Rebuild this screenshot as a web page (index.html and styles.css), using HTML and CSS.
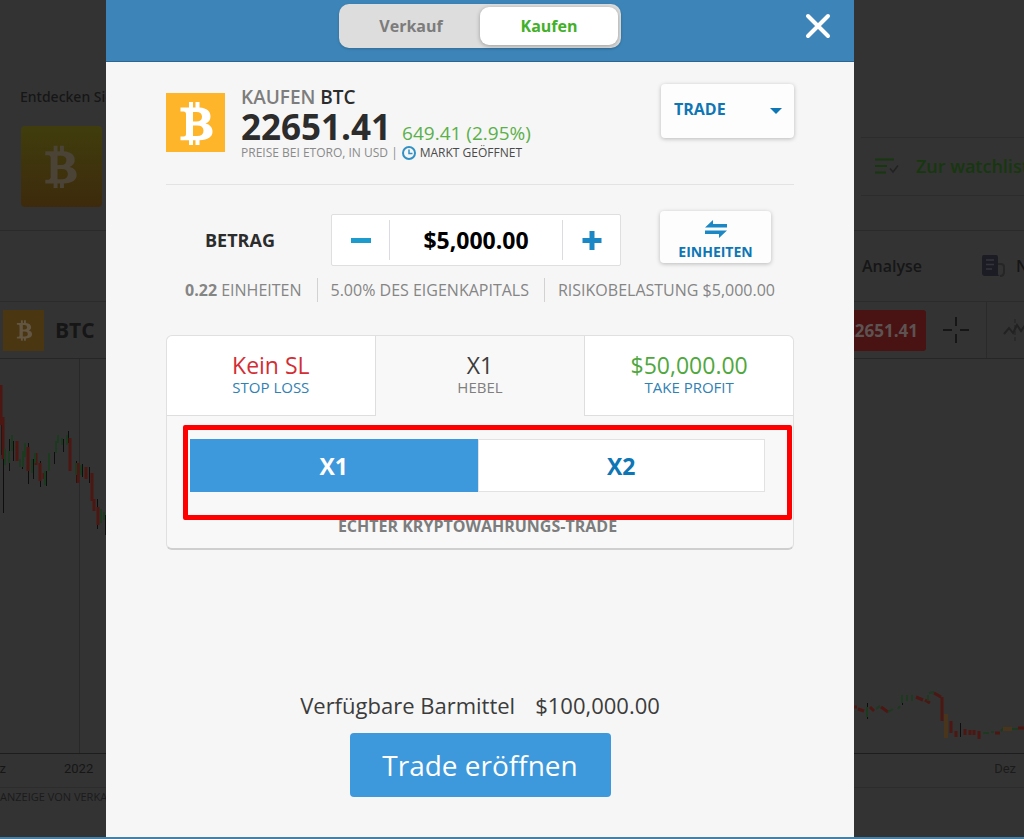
FILE: index.html
```html
<!DOCTYPE html>
<html lang="de">
<head>
    <meta charset="utf-8">
    <meta name="viewport" content="width=device-width, initial-scale=1">
    <title>BTC Kaufen</title>
    <link rel="stylesheet" href="styles.css">
</head>
<body>
    <svg class="sprite" aria-hidden="true">
        <symbol id="btc" viewBox="0 0 59 59">
            <path fill="currentColor" fill-rule="evenodd" d="M14.500 14.500H23V9H27V14.500H29.500V9H33.500V14.500C41 15 44.500 18.500 44.500 23.500C44.500 27 42.500 29.500 39.500 30.500C44 31.500 46.500 34.500 46.500 38.500C46.500 44 42 47 33.500 47.300V52H29.500V47.300H27V52H23V47.300H14.500V43.500H17.500Q20 43.500 20 41V21Q20 18.500 17.500 18.500H14.500ZM27 19V28.500H30.500Q36 28.500 36 23.700Q36 19 30.500 19ZM27 32.500V43H31Q37.500 43 37.500 37.700Q37.500 32.500 31 32.500Z"/>
        </symbol>
    </svg>

    <div class="shell">
        <!-- Market page behind the dialog -->
        <main class="page">
            <p class="discover">Entdecken Sie</p>
            <div class="asset-row">
                <div class="asset-logo"><svg><use href="#btc"/></svg></div>
                <a class="watchlist" href="#">
                    <svg width="24" height="16" viewBox="0 0 24 16" fill="none" stroke="currentColor" stroke-width="2">
                        <path d="M0 1.500H19M0 8H12M0 14.500H11"/>
                        <path d="M15 10.500L18 14L23 7.500" stroke="#222" stroke-width="1.500"/>
                    </svg>
                    Zur watchlist
                </a>
            </div>
            <nav class="page-tabs">
                <a href="#">Analyse</a>
                <a href="#" class="news-tab">
                    <svg width="24" height="24" viewBox="0 0 24 24">
                        <path d="M3 1H15Q17 1 17 3V20Q17 22 19 22H4Q1 22 1 19V3Q1 1 3 1Z" fill="#1c1d24"/>
                        <path d="M17 10H20Q23 10 23 13V18Q23 22 19 22" fill="none" stroke="#262626" stroke-width="2"/>
                        <path d="M5 6H13M5 10.500H13M5 15H11" stroke="#33353c" stroke-width="1.500"/>
                    </svg>
                    News
                </a>
            </nav>
            <div class="chart-bar">
                <div class="chart-logo"><svg><use href="#btc"/></svg></div>
                <strong class="chart-name">BTC</strong>
                <span class="price-tag">22651.41</span>
                <div class="tool">
                    <svg width="26" height="26" viewBox="0 0 26 26" stroke="#161616" stroke-width="2">
                        <path d="M13 0V9M13 17V26M0 13H9M17 13H26"/>
                    </svg>
                </div>
                <div class="tool tool-wave">
                    <svg width="36" height="26" viewBox="0 0 36 26" fill="none" stroke="#222" stroke-width="2">
                        <path d="M1 17L6 11L10 16L14 8L18 14L23 7L28 12L35 8"/>
                        <path d="M12 2V24" stroke-width="1" stroke-dasharray="4 2"/>
                    </svg>
                </div>
            </div>
            <svg class="chart" viewBox="0 0 1024 394" preserveAspectRatio="none" fill="none">
                <path stroke="#282828" d="M79.500 0V394"/>
                <path stroke="#0e0e0e" d="M1.500 60V96M3.500 90V154M9.500 80V112M13.500 82V102M22.500 96V110M28.500 84V125M33.500 100V120M40.500 102V128M46.500 112V127M54.500 93V105M63.500 80V93M68.500 72V84M76.500 102V124M82.500 105V118M89.500 108V124M97.500 140V170M105.500 156V176M867.500 344V360M960.500 364V378M902.500 336V346"/>
                <path stroke="#4c1712" stroke-width="3" d="M1 26V66M3 58V100M17 82V102M28 88V112M36 94V106M40 104V122M44 114V120M70 79V112M78 104V124M86 108V120M92 114V142M94 140V152M98 148V166M854 348H857M858 350L864 352M870 348L874 352M881 348L888 353M916 338L923 341M925 341L930 344M934 334L941 338M942 338V362M951 362V374M956 372V378M965 370V376M970 371V376M974 371V376M979 372V380M995 374H1000M1018 369H1024"/>
                <path stroke="#1b3a20" stroke-width="2" d="M5 90V106M9 92V104M12 76V92M20 100V108M23 92V108M25 84V98M32 100V114M35 94V104M45 112V126M49 94V112M56 82V94M58 76V84M62 79V86M67 76V86M76 104V116M81 106V116M101 150V164M104 153V161M867 348V358M876 350L880 347M888 353L893 350M898 350L900 347M902 336V344M907 336V342M912 336V342M928 336V342M929 334L934 333M983 374H989M991 373H994M1001 372L1004 369M1010 370H1018"/>
                <path stroke="#49341c" stroke-width="4" d="M946 355V379M1003 370H1012"/>
            </svg>
            <div class="axis">
                <span>rz</span>
                <span>2022</span>
                <span class="axis-end">Dez</span>
            </div>
            <p class="notice">ANZEIGE VON VERKAUF</p>
        </main>
        <div class="bottom-strip"></div>

        <!-- Trade dialog -->
        <div class="overlay">
            <section class="dialog" role="dialog" aria-label="Trade">
                <header class="dialog-header">
                    <div class="side-toggle">
                        <button type="button">Verkauf</button>
                        <button type="button" class="active">Kaufen</button>
                    </div>
                    <button type="button" class="close" aria-label="Schließen">
                        <svg width="26" height="26" viewBox="0 0 26 26" stroke="#fff" stroke-width="4" stroke-linecap="round">
                            <path d="M3 3L23 23M23 3L3 23"/>
                        </svg>
                    </button>
                </header>

                <div class="dialog-body">
                    <div class="quote">
                        <div class="quote-logo"><svg><use href="#btc"/></svg></div>
                        <div class="quote-info">
                            <h1>KAUFEN <span>BTC</span></h1>
                            <p class="quote-price"><strong>22651.41</strong> <span>649.41 (2.95%)</span></p>
                            <p class="quote-note">
                                PREISE BEI ETORO, IN USD |
                                <svg width="14" height="14" viewBox="0 0 14 14" fill="none" stroke="#3191c5" stroke-width="2">
                                    <circle cx="7" cy="7" r="6"/>
                                    <path d="M7 3.500V7.500H10.500" stroke-width="1.500"/>
                                </svg>
                                <span>MARKT GEÖFFNET</span>
                            </p>
                        </div>
                        <div class="order-type">
                            <select aria-label="Orderart">
                                <option>TRADE</option>
                            </select>
                            <svg width="12" height="6" viewBox="0 0 12 6"><path d="M0 0H12L6 6Z" fill="#0e76b5"/></svg>
                        </div>
                    </div>

                    <div class="amount">
                        <label for="amount">BETRAG</label>
                        <div class="stepper">
                            <button type="button" aria-label="Weniger">
                                <svg width="20" height="20" viewBox="0 0 20 20"><path d="M0 8H20V13H0Z" fill="#1e9bcd"/></svg>
                            </button>
                            <input type="text" id="amount" value="$5,000.00">
                            <button type="button" aria-label="Mehr">
                                <svg width="20" height="20" viewBox="0 0 20 20"><path d="M7.500 1H12.500V8H19.500V13H12.500V20H7.500V13H0.500V8H7.500Z" fill="#1b87c5"/></svg>
                            </button>
                        </div>
                        <button type="button" class="units">
                            <svg width="22" height="18" viewBox="0 0 22 18" fill="#1b87c5">
                                <path d="M0 7.500L8 0V4H22V7.500Z"/>
                                <path d="M22 10.500L14 18V14H0V10.500Z"/>
                            </svg>
                            EINHEITEN
                        </button>
                    </div>

                    <ul class="facts">
                        <li><strong>0.22</strong> EINHEITEN</li>
                        <li>5.00% DES EIGENKAPITALS</li>
                        <li>RISIKOBELASTUNG $5,000.00</li>
                    </ul>

                    <div class="settings">
                        <div class="settings-tabs">
                            <button type="button" class="stop-loss"><span>Kein SL</span>STOP LOSS</button>
                            <button type="button" class="leverage"><span>X1</span>HEBEL</button>
                            <button type="button" class="take-profit"><span>$50,000.00</span>TAKE PROFIT</button>
                        </div>
                        <div class="leverage-panel">
                            <div class="leverage-options">
                                <button type="button" class="active">X1</button>
                                <button type="button">X2</button>
                            </div>
                            <p>ECHTER KRYPTOWÄHRUNGS-TRADE</p>
                            <div class="highlight"></div>
                        </div>
                    </div>

                    <p class="cash"><span>Verfügbare Barmittel</span><span>$100,000.00</span></p>
                    <button type="button" class="open-trade">Trade eröffnen</button>
                </div>
            </section>
        </div>
    </div>
</body>
</html>
```

FILE: styles.css
```css
* {
    box-sizing: border-box;
}

body, h1, p, ul {
    margin: 0;
    padding: 0;
}

body {
    font-family: "Open Sans", "Noto Sans", sans-serif;
    background-color: #333;
}

button, input, select {
    font-family: inherit;
    margin: 0;
    padding: 0;
    border: 0;
    background: none;
}

a {
    color: inherit;
    text-decoration: none;
}

svg {
    flex-shrink: 0;
}

.sprite {
    display: none;
}

.shell {
    position: relative;
    display: flex;
    flex-direction: column;
    min-height: 100vh;
    overflow: hidden;
}

/* Page behind the dialog */
.page {
    flex: 1;
    display: flex;
    flex-direction: column;
    padding-top: 87px;
    color: #161616;
    white-space: nowrap;
}

.discover {
    padding-left: 20px;
    font-family: "Noto Sans", sans-serif;
    font-size: 14px;
    font-weight: 500;
    line-height: 20px;
}

.asset-row {
    display: flex;
    justify-content: space-between;
    align-items: center;
    height: 124px;
    padding-left: 21px;
    border-bottom: 1px solid #2a2a2a;
}

.asset-logo {
    display: flex;
    width: 81px;
    height: 81px;
    margin-top: -5px;
    border-radius: 4px;
    background: linear-gradient(#403d0d, #3d2a0c);
    color: #4a4336;
}

.asset-logo svg {
    width: 58px;
    height: 58px;
    margin: auto auto auto 10px;
}

.watchlist {
    display: flex;
    align-items: center;
    gap: 17px;
    width: 163px;
    height: 59px;
    margin-top: -5px;
    padding-left: 14px;
    border-top: 1px solid #2c2c2c;
    border-bottom: 1px solid #2c2c2c;
    color: #17370f;
    font-size: 18px;
    font-weight: 600;
}

.page-tabs {
    display: flex;
    justify-content: flex-end;
    align-items: center;
    height: 71px;
    border-bottom: 1px solid #2b2b2b;
    font-size: 16px;
    font-weight: 600;
}

.page-tabs a {
    width: 119px;
}

.page-tabs .news-tab {
    display: flex;
    align-items: center;
    gap: 11px;
    width: 43px;
}

.chart-bar {
    display: flex;
    align-items: center;
    height: 57px;
    padding-left: 3px;
    border-bottom: 1px solid #262626;
}

.chart-logo {
    display: flex;
    width: 41px;
    height: 41px;
    background-color: #4a3611;
    color: #625642;
}

.chart-logo svg {
    width: 28px;
    height: 28px;
    margin: auto;
}

.chart-name {
    flex: 1;
    padding-left: 11px;
    font-size: 21px;
}

.price-tag {
    padding: 0 8px;
    border-radius: 3px;
    background-color: #481312;
    color: #5d5353;
    font-size: 17px;
    font-weight: 700;
    line-height: 41px;
}

.tool {
    display: flex;
    justify-content: center;
    width: 60px;
}

.tool-wave {
    justify-content: flex-start;
    align-items: center;
    width: 38px;
    height: 56px;
    padding-left: 16px;
    border-left: 1px solid #2a2a2a;
    overflow: hidden;
}

.chart {
    display: block;
    width: 100%;
    height: 394px;
}

.axis {
    display: flex;
    height: 34px;
    padding-right: 8px;
    border-top: 1px solid #1d1d1d;
    font-family: Roboto, sans-serif;
    font-size: 13px;
    line-height: 30px;
}

.axis span:first-child {
    width: 69px;
    margin-left: -5px;
}

.axis-end {
    margin-left: auto;
    color: #1b1b1b;
}

.notice {
    border-top: 1px solid #2c2c2c;
    color: #1b1b1b;
    font-size: 11px;
    line-height: 18px;
}

.bottom-strip {
    height: 2px;
    background-color: #4680a4;
}

/* Dialog */
.overlay {
    position: absolute;
    inset: 0 0 2px;
    display: flex;
    padding: 0 170px 0 106px;
}

.dialog {
    flex: 1;
    background-color: #f6f6f6;
    color: #2c2c2c;
}

.dialog-header {
    display: grid;
    grid-template-columns: 1fr auto 1fr;
    align-items: center;
    height: 62px;
    padding-bottom: 10px;
    border-bottom: 1px solid #2c658e;
    background-color: #3d85b9;
}

.side-toggle {
    grid-column: 2;
    display: flex;
    padding: 3px;
    border-radius: 10px;
    background-color: #ddd;
    box-shadow: 0 1px 3px rgba(0, 0, 0, 0.2);
}

.side-toggle button {
    width: 138px;
    height: 38px;
    border-radius: 9px;
    color: #7c7c7c;
    font-size: 16px;
    font-weight: 700;
}

.side-toggle .active {
    background-color: #fff;
    color: #43b02a;
    box-shadow: 0 1px 4px rgba(0, 0, 0, 0.3);
}

.close {
    justify-self: end;
    display: flex;
    margin-right: 23px;
}

.dialog-body {
    padding: 22px 60px 40px;
}

.quote {
    display: flex;
    align-items: flex-start;
    height: 101px;
    border-bottom: 1px solid #e3e3e3;
}

.quote-logo {
    display: flex;
    width: 59px;
    height: 59px;
    margin-top: 9px;
    background-color: #ffb52a;
    color: #fff;
}

.quote-logo svg {
    width: 59px;
    height: 59px;
}

.quote-info {
    flex: 1;
    padding-left: 16px;
    white-space: nowrap;
}

.quote h1 {
    padding-top: 1px;
    color: #7d7d7d;
    font-size: 19px;
    font-weight: 600;
    line-height: 24px;
}

.quote h1 span {
    color: #2c2c2c;
}

.quote-price {
    display: flex;
    align-items: baseline;
    gap: 11px;
    color: #5bb04a;
    font-size: 19px;
    line-height: 20px;
}

.quote-price strong {
    color: #2c2c2c;
    font-size: 35px;
    line-height: 36px;
}

.quote-note {
    display: flex;
    align-items: center;
    gap: 4px;
    color: #8a8a8a;
    font-size: 12px;
    line-height: 16px;
}

.quote-note span {
    color: #4a4a4a;
}

.order-type {
    position: relative;
    width: 133px;
    border-radius: 4px;
    background-color: #fdfdfd;
    box-shadow: 0 1px 4px rgba(0, 0, 0, 0.25);
}

.order-type select {
    display: block;
    width: 100%;
    height: 54px;
    padding: 0 13px 4px;
    appearance: none;
    color: #0e76b5;
    font-size: 16px;
    font-weight: 700;
}

.order-type svg {
    position: absolute;
    top: 24px;
    right: 12px;
    pointer-events: none;
}

/* Amount */
.amount {
    display: flex;
    align-items: center;
    height: 52px;
    margin-top: 29px;
    padding-right: 23px;
}

.amount label {
    flex: 1;
    padding-left: 39px;
    font-size: 18px;
    font-weight: 700;
}

.stepper {
    display: flex;
    align-items: center;
    width: 290px;
    height: 52px;
    border: 1px solid #dfdfdf;
    border-radius: 2px;
    background-color: #fff;
}

.stepper button {
    display: flex;
    justify-content: center;
    width: 57px;
}

.stepper input {
    flex: 1;
    min-width: 0;
    height: 40px;
    border: solid #dcdce0;
    border-width: 0 1px;
    color: #000;
    font-size: 23px;
    font-weight: 700;
    text-align: center;
}

.units {
    display: flex;
    flex-direction: column;
    align-items: center;
    justify-content: flex-end;
    gap: 4px;
    width: 111px;
    height: 52px;
    margin: 0 0 6px 39px;
    padding-bottom: 2px;
    border-radius: 4px;
    background-color: #fdfdfd;
    box-shadow: 0 1px 4px rgba(0, 0, 0, 0.25);
    color: #0e76b5;
    font-size: 14px;
    font-weight: 700;
}

.facts {
    display: flex;
    justify-content: center;
    margin-top: 12px;
    color: #858585;
    font-size: 16px;
    line-height: 24px;
    list-style: none;
    white-space: nowrap;
}

.facts li + li {
    margin-left: 15px;
    padding-left: 13px;
    border-left: 1px solid #d2d2d2;
}

/* Stop loss, leverage, take profit */
.settings {
    margin-top: 33px;
    border: 1px solid #e0e0e0;
    border-bottom: 2px solid #cfcfcf;
    border-radius: 6px;
    background-color: #f8f8f8;
}

.settings-tabs {
    display: grid;
    grid-template-columns: repeat(3, 1fr);
}

.settings-tabs button {
    height: 80px;
    padding-bottom: 3px;
    border-bottom: 1px solid #dedede;
    background-color: #fff;
    color: #2f81b3;
    font-size: 15px;
    line-height: 18px;
}

.settings-tabs span {
    display: block;
    font-size: 23px;
    line-height: 26px;
}

.settings-tabs .stop-loss {
    border-right: 1px solid #dedede;
    border-top-left-radius: 6px;
}

.settings-tabs .take-profit {
    border-left: 1px solid #dedede;
    border-top-right-radius: 6px;
}

.settings-tabs .leverage {
    border-bottom-color: transparent;
    background: none;
    color: #7f7f7f;
}

.settings-tabs .stop-loss span {
    color: #d22e35;
}

.settings-tabs .leverage span {
    color: #3c3c3c;
}

.settings-tabs .take-profit span {
    color: #4fa83d;
}

.leverage-panel {
    position: relative;
    padding: 23px 28px 11px 23px;
    text-align: center;
}

.leverage-options {
    display: grid;
    grid-template-columns: 1fr 1fr;
}

.leverage-options button {
    height: 53px;
    border: 1px solid #e2e2e2;
    background-color: #fff;
    color: #0e76b5;
    font-size: 23px;
    font-weight: 700;
}

.leverage-options .active {
    border-color: #3d98dc;
    background-color: #3d98dc;
    color: #fff;
}

.leverage-panel p {
    margin-top: 23px;
    color: #7d7d7d;
    font-size: 16px;
    font-weight: 700;
    line-height: 22px;
}

.highlight {
    position: absolute;
    inset: 9px 1px 28px 16px;
    border: 5px solid #f00;
    border-radius: 2px;
    pointer-events: none;
}

.cash {
    display: flex;
    justify-content: center;
    gap: 20px;
    margin-top: 138px;
    color: #3c3c3c;
    font-size: 22px;
    line-height: 34px;
}

.open-trade {
    display: block;
    width: 261px;
    height: 64px;
    margin: 11px auto 0;
    border-radius: 4px;
    background-color: #3d98dc;
    color: #fff;
    font-size: 28px;
}
```
